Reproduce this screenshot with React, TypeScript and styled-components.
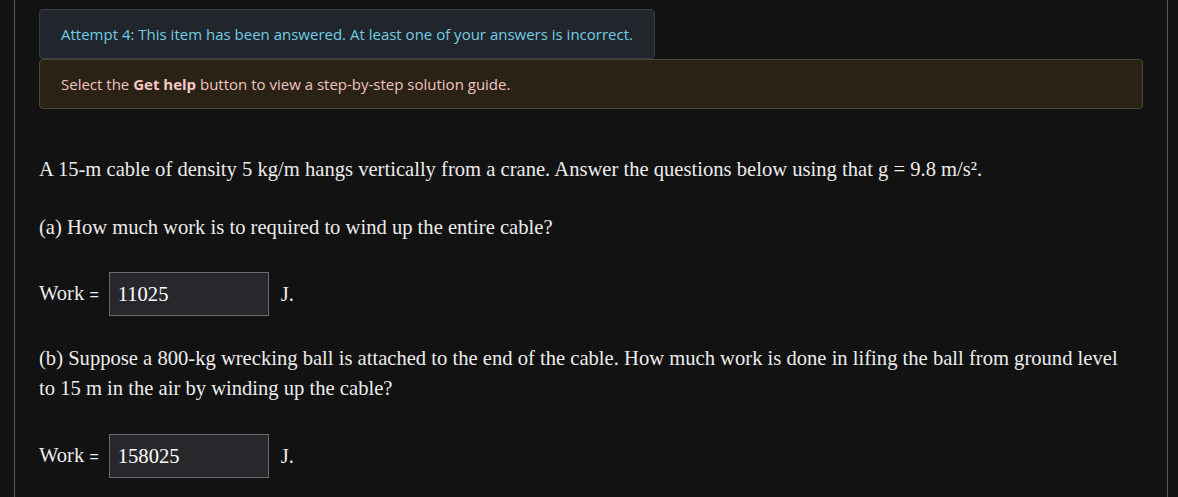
import styled, { createGlobalStyle } from 'styled-components'

const Global = createGlobalStyle`
  html, body {
    margin: 0;
    background: #121212;
  }
`

const Page = styled.div`
  margin-left: 14px;
  width: 1154px;
  min-height: 497px;
  border-left: 1px solid #5c5c5c;
  border-right: 1px solid #5c5c5c;
  padding: 9px 24px 0 24px;
  box-sizing: border-box;
  color: #ececec;
`

const Alert = styled.div<{ tone: 'info' | 'warn'; fit?: boolean }>`
  box-sizing: border-box;
  width: ${(p) => (p.fit ? 'fit-content' : 'auto')};
  height: 50px;
  display: flex;
  align-items: center;
  padding: 0 21px;
  border-radius: 4px;
  font-family: 'Open Sans', sans-serif;
  font-size: 15px;
  background: ${(p) => (p.tone === 'info' ? '#21262c' : '#2a2315')};
  border: 1px solid ${(p) => (p.tone === 'info' ? '#393e44' : '#4b4437')};
  color: ${(p) => (p.tone === 'info' ? '#72cde4' : '#f2c2c0')};
  b {
    font-weight: 700;
    color: #f6c9c6;
  }
`

const Question = styled.div`
  font-family: 'Liberation Serif', serif;
  font-size: 20.6px;
  line-height: 30px;
  padding-top: 45px;
  padding-right: 18px;
`

const Para = styled.p<{ gap?: number }>`
  margin: 0;
  margin-top: ${(p) => p.gap ?? 0}px;
`

const AnswerRow = styled.div<{ gap: number }>`
  display: flex;
  align-items: center;
  margin-top: ${(p) => p.gap}px;
  height: 44px;
`

const Label = styled.span`
  margin-right: 10px;
`

const Eq = styled.span`
  font-family: 'Liberation Sans', sans-serif;
  font-size: 16px;
`

const Input = styled.div`
  box-sizing: border-box;
  width: 160px;
  height: 44px;
  padding: 0 8px;
  display: flex;
  align-items: center;
  background: #27282b;
  border: 1px solid #6a6a6a;
  color: #ffffff;
`

const Unit = styled.span`
  margin-left: 12px;
`

export default function App() {
  return (
    <>
      <Global />
      <Page>
        <Alert tone="info" fit>
          Attempt 4: This item has been answered. At least one of your answers is incorrect.
        </Alert>
        <Alert tone="warn">
          <span>
            Select the <b>Get help</b> button to view a step-by-step solution guide.
          </span>
        </Alert>
        <Question>
          <Para>
            A 15-m cable of density 5 kg/m hangs vertically from a crane. Answer the questions below
            using that g = 9.8 m/s².
          </Para>
          <Para gap={28}>(a) How much work is to required to wind up the entire cable?</Para>
          <AnswerRow gap={30}>
            <Label>
              Work <Eq>=</Eq>
            </Label>
            <Input>11025</Input>
            <Unit>J.</Unit>
          </AnswerRow>
          <Para gap={27}>
            (b) Suppose a 800-kg wrecking ball is attached to the end of the cable. How much work is
            done in lifing the ball from ground level to 15 m in the air by winding up the cable?
          </Para>
          <AnswerRow gap={31}>
            <Label>
              Work <Eq>=</Eq>
            </Label>
            <Input>158025</Input>
            <Unit>J.</Unit>
          </AnswerRow>
        </Question>
      </Page>
    </>
  )
}
